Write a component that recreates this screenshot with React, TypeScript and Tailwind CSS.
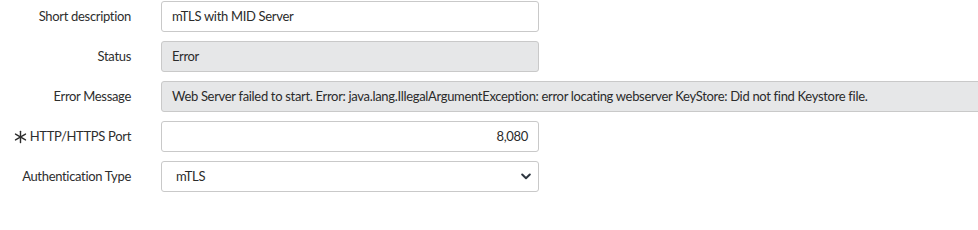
import React from "react";

const font = { fontFamily: "Lato, 'Liberation Sans', sans-serif" };

function Row({ label, required, children }: { label: string; required?: boolean; children: React.ReactNode }) {
  return (
    <div className="flex items-center h-[31px]">
      <div className="w-[131px] shrink-0 flex items-center justify-end text-[13px] tracking-[-0.32px] text-[#2e2e2e] relative">
        {required && (
          <span className="absolute left-[14px] top-1/2 -translate-y-1/2">
            <svg width="13" height="13" viewBox="0 0 13 13">
              <g stroke="#2e2e2e" strokeWidth="1.4" strokeLinecap="round">
                <line x1="6.5" y1="0.8" x2="6.5" y2="12.2" />
                <line x1="1.5" y1="3.6" x2="11.5" y2="9.4" />
                <line x1="1.5" y1="9.4" x2="11.5" y2="3.6" />
              </g>
            </svg>
          </span>
        )}
        <span>{label}</span>
      </div>
      <div className="ml-[30px] flex-1 min-w-0 h-full">{children}</div>
    </div>
  );
}

export default function App() {
  return (
    <div className="w-[978px] h-[230px] bg-white overflow-hidden pt-[1px]" style={font}>
      <div className="flex flex-col gap-[9px]">
        <Row label="Short description">
          <div className="w-[378px] h-full border border-[#c9c9c9] rounded-[3px] bg-white flex items-center px-[10px] text-[13px] tracking-[-0.32px] text-[#2b2b2b]">
            mTLS with MID Server
          </div>
        </Row>
        <Row label="Status">
          <div className="w-[378px] h-full border border-[#c9c9c9] rounded-[3px] bg-[#e6e7e8] flex items-center px-[10px] text-[13px] tracking-[-0.32px] text-[#2b2b2b]">
            Error
          </div>
        </Row>
        <Row label="Error Message">
          <div className="w-[830px] h-full border border-[#c9c9c9] rounded-[3px] bg-[#e6e7e8] flex items-center px-[10px] text-[13px] tracking-[-0.32px] text-[#2b2b2b] whitespace-nowrap">
            Web Server failed to start. Error: java.lang.IllegalArgumentException: error locating webserver KeyStore: Did not find Keystore file.
          </div>
        </Row>
        <Row label="HTTP/HTTPS Port" required>
          <div className="w-[378px] h-full border border-[#c9c9c9] rounded-[3px] bg-white flex items-center justify-end px-[10px] text-[13px] tracking-[-0.32px] text-[#2b2b2b]">
            8,080
          </div>
        </Row>
        <Row label="Authentication Type">
          <div className="w-[378px] h-full border border-[#c9c9c9] rounded-[3px] bg-white flex items-center justify-between pl-[14px] pr-[7px] text-[13px] tracking-[-0.32px] text-[#2b2b2b]">
            <span>mTLS</span>
            <svg width="10" height="7" viewBox="0 0 10 7">
              <polyline points="1.2,1.5 5,5.2 8.8,1.5" fill="none" stroke="#2e3640" strokeWidth="2" strokeLinecap="round" strokeLinejoin="round" />
            </svg>
          </div>
        </Row>
      </div>
    </div>
  );
}
